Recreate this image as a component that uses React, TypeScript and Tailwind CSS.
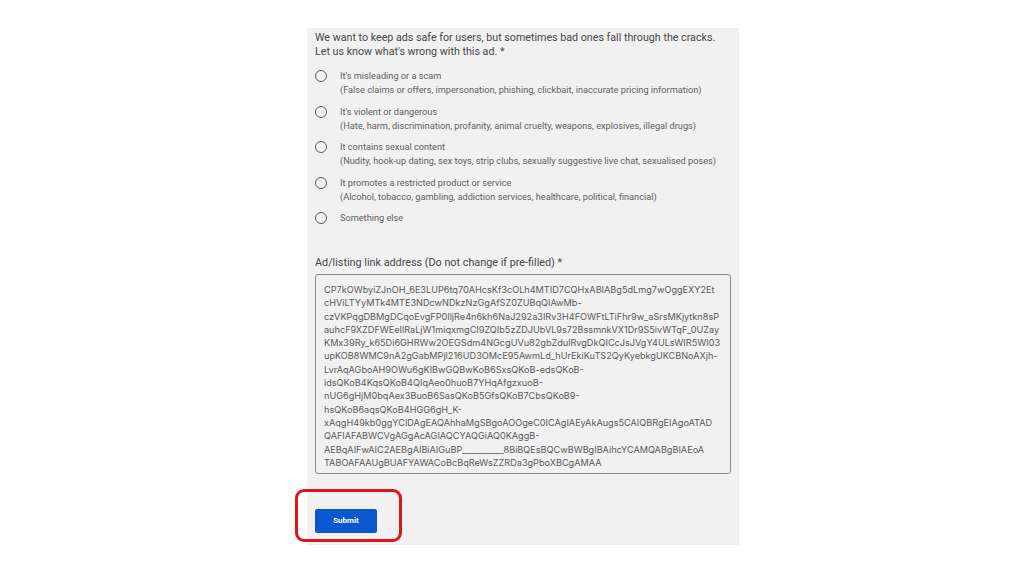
const options = [
  {
    label: "It's misleading or a scam",
    desc: "(False claims or offers, impersonation, phishing, clickbait, inaccurate pricing information)",
  },
  {
    label: "It's violent or dangerous",
    desc: "(Hate, harm, discrimination, profanity, animal cruelty, weapons, explosives, illegal drugs)",
  },
  {
    label: "It contains sexual content",
    desc: "(Nudity, hook-up dating, sex toys, strip clubs, sexually suggestive live chat, sexualised poses)",
  },
  {
    label: "It promotes a restricted product or service",
    desc: "(Alcohol, tobacco, gambling, addiction services, healthcare, political, financial)",
  },
  { label: "Something else", desc: "" },
];

// link text, split the way the field wraps it
const linkLines = [
  "CP7kOWbyiZJnOH_6E3LUP6tq70AHcsKf3cOLh4MTID7CQHxABIABg5dLmg7wOggEXY2Et",
  "cHViLTYyMTk4MTE3NDcwNDkzNzGgAfSZ0ZUBqQIAwMb-",
  "czVKPqgDBMgDCqoEvgFP0IljRe4n6kh6NaJ292a3IRv3H4FOWFtLTiFhr9w_aSrsMKjytkn8sP",
  "auhcF9XZDFWEeIlRaLjW1miqxmgCI9ZQIb5zZDJUbVL9s72BssmnkVX1Dr9S5ivWTqF_0UZay",
  "KMx39Ry_k65Di6GHRWw2OEGSdm4NGcgUVu82gbZdulRvgDkQICcJsJVgY4ULsWIR5WI03",
  "upKOB8WMC9nA2gGabMPjl216UD3OMcE95AwmLd_hUrEkiKuTS2QyKyebkgUKCBNoAXjh-",
  "LvrAqAGboAH9OWu6gKIBwGQBwKoB6SxsQKoB-edsQKoB-",
  "idsQKoB4KqsQKoB4QIqAeo0huoB7YHqAfgzxuoB-",
  "nUG6gHjM0bqAex3BuoB6SasQKoB5GfsQKoB7CbsQKoB9-",
  "hsQKoB6aqsQKoB4HGG6gH_K-",
  "xAqgH49kb0ggYCIDAgEAQAhhaMgSBgoAOOgeC0ICAgIAEyAkAugs5CAIQBRgEIAgoATAD",
  "QAFIAFABWCVgAGgAcAGIAQCYAQGiAQ0KAggB-",
  "AEBqAIFwAIC2AEBgAIBiAIGuBP__________8BiBQEsBQCwBWBgIBAihcYCAMQABgBIAEoA",
  "TABOAFAAUgBUAFYAWACoBcBqReWsZZRDa3gPboXBCgAMAA",
];

const Radio = () => (
  <span className="mt-[1px] h-[12px] w-[12px] shrink-0 rounded-full border-[1.5px] border-[#5a5a5a]" />
);

export default function App() {
  return (
    <div className="min-h-screen w-full bg-white font-['Roboto',sans-serif]">
      <div className="ml-[307px] pt-[28px]">
        <div className="flex w-[432px] flex-col bg-[#f1f1f1] px-[8px] pb-[12px] pt-[3px]">
          <p className="whitespace-nowrap text-[10.7px] leading-[14px] text-[#474747]">
            We want to keep ads safe for users, but sometimes bad ones fall through the cracks.
            <br />
            Let us know what&apos;s wrong with this ad. *
          </p>

          <div className="mt-[10px] flex flex-col gap-[7.5px]">
            {options.map((o, i) => (
              <div key={i} className="flex items-start gap-[13px]">
                <Radio />
                <div className="flex flex-col text-[9.2px] leading-[14px] text-[#5f5f5f]">
                  <span>{o.label}</span>
                  {o.desc && <span>{o.desc}</span>}
                </div>
              </div>
            ))}
          </div>

          <p className="mt-[31px] text-[10.8px] leading-[14px] text-[#474747]">
            Ad/listing link address (Do not change if pre-filled) *
          </p>

          <div className="mt-[4px] h-[200px] w-[416px] rounded-[3px] border border-[#8c8c8c] px-[8px] pt-[8px] font-['Inter',sans-serif] text-[9.15px] leading-[13.3px] text-[#5a5a5a]">
            {linkLines.map((l, i) => (
              <div key={i} className="whitespace-nowrap">
                {l}
              </div>
            ))}
          </div>

          <div className="relative mt-[32px] self-start">
            <div className="pointer-events-none absolute left-[-20px] top-[-17px] h-[53px] w-[107px] rounded-[9px] border-[3.5px] border-[#e0141b]" />
            <button className="h-[24px] w-[62px] rounded-[2px] bg-[#0b57d0] text-[8px] font-bold text-white">
              Submit
            </button>
          </div>
        </div>
      </div>
    </div>
  );
}
